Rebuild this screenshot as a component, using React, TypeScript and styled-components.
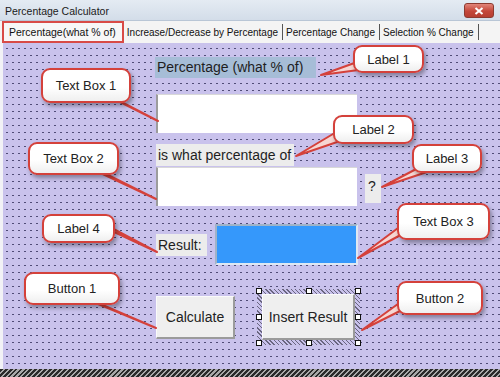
import styled, { createGlobalStyle } from "styled-components";

const GlobalStyle = createGlobalStyle`
  html, body {
    margin: 0;
    padding: 0;
    background: #ffffff;
  }
  #root {
    width: 500px;
    height: 377px;
    overflow: hidden;
  }
`;

const TABS = [
  "Percentage(what % of)",
  "Increase/Decrease by Percentage",
  "Percentage Change",
  "Selection % Change",
];

// callouts over the designer canvas (canvas coords, top of canvas = y 43)
type Note = {
  text: string;
  x: number;
  y: number;
  w: number;
  h: number;
  tail: string;
};

const NOTES: Note[] = [
  { text: "Label 1", x: 353, y: 2, w: 71, h: 28, tail: "360,18 366,26 321,32" },
  { text: "Text Box 1", x: 41, y: 25, w: 90, h: 35, tail: "108,52 118,58 158,78" },
  { text: "Label 2", x: 333, y: 72, w: 81, h: 29, tail: "338,88 346,96 296,113" },
  { text: "Text Box 2", x: 28, y: 99, w: 91, h: 33, tail: "92,126 104,130 156,156" },
  { text: "Label 3", x: 412, y: 101, w: 70, h: 29, tail: "420,124 430,128 382,144" },
  { text: "Label 4", x: 42, y: 171, w: 73, h: 29, tail: "106,182 112,188 157,209" },
  { text: "Text Box 3", x: 397, y: 160, w: 93, h: 37, tail: "402,182 408,188 358,215" },
  { text: "Button 1", x: 24, y: 229, w: 96, h: 33, tail: "86,256 98,260 156,285" },
  { text: "Button 2", x: 397, y: 238, w: 86, h: 34, tail: "402,258 408,264 362,287" },
];

const HANDLES = [
  { left: "-1px", top: "-1px" },
  { left: "calc(50% - 3px)", top: "-1px" },
  { right: "-1px", top: "-1px" },
  { left: "-1px", top: "calc(50% - 3px)" },
  { right: "-1px", top: "calc(50% - 3px)" },
  { left: "-1px", bottom: "-1px" },
  { left: "calc(50% - 3px)", bottom: "-1px" },
  { right: "-1px", bottom: "-1px" },
];

export default function App() {
  return (
    <>
      <GlobalStyle />
      <Window>
        <TitleBar>
          <Title>Percentage Calculator</Title>
          <CloseButton>
            <svg width="10" height="8" viewBox="0 0 10 8">
              <path d="M1.5 1 L8.5 7 M8.5 1 L1.5 7" stroke="#fff" strokeWidth="2" />
            </svg>
          </CloseButton>
        </TitleBar>
        <TabStrip>
          {TABS.map((t, i) => (
            <Tab key={t} $active={i === 0}>
              {t}
            </Tab>
          ))}
        </TabStrip>
        <Canvas>
          <Controls>
            <FormLabel $bg="#a6bdd7" $w={161} $h={21} style={{ marginLeft: -1 }}>
              Percentage (what % of)
            </FormLabel>
            <TextBox $mt={16} />
            <FormLabel $bg="#ececec" $w={138} $h={22} $mt={11}>
              is what percentage of
            </FormLabel>
            <Row $mt={1} $gap={8}>
              <TextBox />
              <QuestionLabel>?</QuestionLabel>
            </Row>
            <Row $mt={18} $gap={8}>
              <FormLabel $bg="#ececec" $w={51} $h={22}>
                Result:
              </FormLabel>
              <ResultBox />
            </Row>
            <Row $mt={24} $gap={22}>
              <FormButton $w={79} $h={43}>Calculate</FormButton>
              <Selection>
                <FormButton $w={93} $h={46}>Insert Result</FormButton>
                {HANDLES.map((h, i) => (
                  <Handle key={i} style={h} />
                ))}
              </Selection>
            </Row>
          </Controls>
          <Tails width="500" height="326" viewBox="0 0 500 326">
            {NOTES.map((n) => (
              <polygon
                key={n.text}
                points={n.tail}
                fill="#f6d6d3"
                stroke="#d4413b"
                strokeWidth="2"
                strokeLinejoin="round"
              />
            ))}
          </Tails>
          {NOTES.map((n) => (
            <Bubble key={n.text} style={{ left: n.x, top: n.y, width: n.w, height: n.h }}>
              {n.text}
            </Bubble>
          ))}
        </Canvas>
        <Hatch />
      </Window>
    </>
  );
}

const Window = styled.div`
  width: 500px;
  height: 377px;
  display: flex;
  flex-direction: column;
  font-family: "Liberation Sans", Arial, sans-serif;
  background: #f0f0f0;
`;

const TitleBar = styled.div`
  height: 21px;
  display: flex;
  align-items: center;
  justify-content: space-between;
  padding: 0 6px 0 5px;
  background: linear-gradient(#e4ebf3, #d3dde9);
  border-bottom: 1px solid #b9c6d6;
  box-sizing: border-box;
`;

const Title = styled.span`
  font-size: 10.5px;
  color: #1a1a1a;
  margin-top: 1px;
`;

const CloseButton = styled.div`
  width: 28px;
  height: 13px;
  border-radius: 3px;
  border: 1px solid #8c3a30;
  background: linear-gradient(#e2857a, #c4473a 55%, #b63e31);
  display: flex;
  align-items: center;
  justify-content: center;
  margin-top: 1px;
`;

const TabStrip = styled.div`
  height: 22px;
  display: flex;
  align-items: stretch;
  padding-left: 2px;
  background: #f4f4f4;
  box-sizing: border-box;
`;

const Tab = styled.div<{ $active?: boolean }>`
  display: flex;
  align-items: center;
  font-size: ${({ $active }) => ($active ? "10.5px" : "10px")};
  color: #111;
  white-space: nowrap;
  padding: ${({ $active }) => ($active ? "0 6px 0 5px" : "0 4px 0 3px")};
  border: ${({ $active }) => ($active ? "2px solid #d84b47" : "none")};
  border-right: ${({ $active }) => ($active ? "2px solid #d84b47" : "1px solid #555")};
  background: ${({ $active }) => ($active ? "#f7f7f7" : "transparent")};
  margin: ${({ $active }) => ($active ? "0" : "3px 0 3px 0")};
  box-sizing: border-box;
`;

const Canvas = styled.div`
  position: relative;
  flex: 1;
  background-color: #c9c2ec;
  background-image: radial-gradient(circle, rgba(40, 36, 80, 0.75) 0.5px, transparent 0.9px);
  background-size: 6px 7px;
  background-position: 1px 2px;
  border-left: 3px solid #f2f2f6;
  box-sizing: border-box;
`;

const Controls = styled.div`
  display: flex;
  flex-direction: column;
  align-items: flex-start;
  padding: 14px 0 0 153px;
  font-size: 14px;
  color: #1e1e1e;
`;

const Row = styled.div<{ $mt?: number; $gap: number }>`
  display: flex;
  align-items: center;
  gap: ${({ $gap }) => $gap}px;
  margin-top: ${({ $mt = 0 }) => $mt}px;
`;

const FormLabel = styled.div<{ $bg: string; $w: number; $h: number; $mt?: number }>`
  width: ${({ $w }) => $w}px;
  height: ${({ $h }) => $h}px;
  line-height: ${({ $h }) => $h}px;
  margin-top: ${({ $mt = 0 }) => $mt}px;
  background: ${({ $bg }) => $bg};
  padding-left: 2px;
  box-sizing: border-box;
  white-space: nowrap;
`;

const TextBox = styled.div<{ $mt?: number }>`
  width: 201px;
  height: 39px;
  margin-top: ${({ $mt = 0 }) => $mt}px;
  background: #ffffff;
  border-left: 2px solid #9c9c9c;
  border-top: 1px solid #d8d8d8;
  box-sizing: border-box;
`;

const QuestionLabel = styled.div`
  width: 16px;
  height: 29px;
  background: #ececec;
  padding: 4px 0 0 3px;
  box-sizing: border-box;
  align-self: flex-start;
  margin-top: 7px;
`;

const ResultBox = styled.div`
  width: 143px;
  height: 41px;
  background: #3598fb;
  border: 2px solid #dfe8f2;
  border-top-color: #9fb3c8;
  border-left-color: #9fb3c8;
  box-sizing: border-box;
`;

const FormButton = styled.div<{ $w: number; $h: number }>`
  width: ${({ $w }) => $w}px;
  height: ${({ $h }) => $h}px;
  display: flex;
  align-items: center;
  justify-content: center;
  background: #efefef;
  border: 1px solid #fafafa;
  border-right: 2px solid #9b9b9b;
  border-bottom: 2px solid #9b9b9b;
  box-sizing: border-box;
  font-size: 14px;
  color: #222;
  white-space: nowrap;
`;

const Selection = styled.div`
  position: relative;
  padding: 5px;
  background: repeating-linear-gradient(45deg, #6a6680 0 1px, #c9c2ec 1px 3px);
`;

const Handle = styled.div`
  position: absolute;
  width: 6px;
  height: 6px;
  background: #fff;
  border: 1px solid #111;
  box-sizing: border-box;
`;

const Tails = styled.svg`
  position: absolute;
  left: -3px;
  top: 0;
  pointer-events: none;
`;

const Bubble = styled.div`
  position: absolute;
  display: flex;
  align-items: center;
  justify-content: center;
  box-sizing: border-box;
  margin-left: -3px;
  border: 2px solid #d4413b;
  border-radius: 9px;
  background: linear-gradient(#ffffff 55%, #efefef);
  box-shadow: 2px 3px 4px rgba(0, 0, 0, 0.35);
  font-size: 13px;
  color: #222;
  white-space: nowrap;
`;

const Hatch = styled.div`
  height: 8px;
  background: repeating-linear-gradient(-45deg, #2a2a2a 0 2px, #a8a8a8 2px 3.5px);
`;
